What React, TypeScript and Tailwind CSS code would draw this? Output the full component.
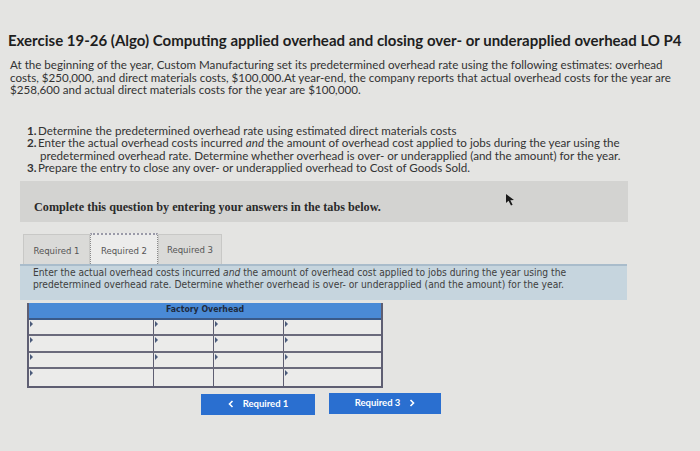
import React from "react";

function Cell({ w, mark }: { w: string; mark?: boolean }) {
  return (
    <div className={`${w} h-full border-r border-[#5e5e72] last:border-r-0 bg-[#ebebea] relative`}>
      {mark && (
        <div className="absolute left-[1px] top-[1px] w-0 h-0 border-t-[3px] border-t-transparent border-b-[3px] border-b-transparent border-l-[3px] border-l-[#4a5a7a]" />
      )}
    </div>
  );
}

function Row({ last, marks }: { last?: boolean; marks: boolean[] }) {
  return (
    <div className={`flex h-[16.5px] ${last ? "" : "border-b-2 border-[#6a6a7c]"}`}>
      <Cell w="w-[125px]" mark={marks[0]} />
      <Cell w="w-[60px]" mark={marks[1]} />
      <Cell w="w-[70px]" mark={marks[2]} />
      <Cell w="flex-1" mark={marks[3]} />
    </div>
  );
}

export default function App() {
  return (
    <div className="w-[700px] h-[451px] overflow-hidden bg-[#e4e4e2] text-[#2e2e2e] font-['Lato',sans-serif]">
      <div className="pt-[31px] pl-[8px] text-[15px] font-bold leading-[18px] text-[#1e1e1e] whitespace-nowrap">
        Exercise 19-26 (Algo) Computing applied overhead and closing over- or underapplied overhead LO P4
      </div>
      <div className="mt-[10px] pl-[10px] text-[11.6px] leading-[12.5px] text-[#333] whitespace-nowrap">
        At the beginning of the year, Custom Manufacturing set its predetermined overhead rate using the following estimates: overhead
        <br />
        costs, $250,000, and direct materials costs, $100,000.At year-end, the company reports that actual overhead costs for the year are
        <br />
        $258,600 and actual direct materials costs for the year are $100,000.
      </div>
      <div className="mt-[28px] pl-[27px] text-[11.6px] leading-[12.5px] text-[#333] whitespace-nowrap">
        <div className="flex">
          <span className="w-[11px] shrink-0 font-bold">1.</span>
          <span>Determine the predetermined overhead rate using estimated direct materials costs</span>
        </div>
        <div className="flex">
          <span className="w-[11px] shrink-0 font-bold">2.</span>
          <span>
            Enter the actual overhead costs incurred <i>and</i> the amount of overhead cost applied to jobs during the year using the
            <br />
            <span className="pl-[2px]">predetermined overhead rate. Determine whether overhead is over- or underapplied (and the amount) for the year.</span>
          </span>
        </div>
        <div className="flex">
          <span className="w-[11px] shrink-0 font-bold">3.</span>
          <span>Prepare the entry to close any over- or underapplied overhead to Cost of Goods Sold.</span>
        </div>
      </div>
      <div className="relative mt-[6px] ml-[20px] w-[608px] h-[41px] bg-[#d3d3d1]">
        <div className="absolute left-[14px] top-[20px] text-[12.2px] font-bold font-['Liberation_Serif',serif] text-[#2a2a2a] leading-[13px] whitespace-nowrap">
          Complete this question by entering your answers in the tabs below.
        </div>
        <svg className="absolute left-[485px] top-[12px]" width="12" height="14" viewBox="0 0 12 14">
          <path d="M1 1 L1 10 L3.5 7.8 L6 12.5 L7.6 11.7 L5.3 7.2 L9 7 Z" fill="#1a1a1a" />
        </svg>
      </div>
      <div className="mt-[11px] ml-[23px] flex items-end h-[31px] font-['DejaVu_Sans_Condensed','DejaVu_Sans',sans-serif] text-[9.5px] text-[#555]">
        <div className="w-[67px] h-[30px] bg-[#dadad8] border border-[#c8c8c6] border-b-0 flex items-center justify-center pt-[4px]">
          Required 1
        </div>
        <div className="w-[68px] h-[31px] bg-[#ececeb] border-x border-[#8a8a8a] border-t-2 border-t-[#9a9aa8] border-dotted flex items-center justify-center pt-[4px]">
          Required 2
        </div>
        <div className="w-[64px] h-[30px] bg-[#dadad8] border border-[#c8c8c6] border-b-0 flex items-center justify-center pt-[3px]">
          Required 3
        </div>
      </div>
      <div className="ml-[20px] w-[607px] h-[36px] bg-[#c6d5de] border-t-2 border-[#a9bccb] pl-[13px] pt-[1px] font-['DejaVu_Sans_Condensed','DejaVu_Sans',sans-serif] text-[10.2px] leading-[12.5px] text-[#404040] whitespace-nowrap">
        Enter the actual overhead costs incurred <i>and</i> the amount of overhead cost applied to jobs during the year using the
        <br />
        predetermined overhead rate. Determine whether overhead is over- or underapplied (and the amount) for the year.
      </div>
      <div className="mt-[3px] ml-[27px] w-[356px] border-2 border-t-0 border-[#5e5e72] bg-[#ebebea]">
        <div className="h-[17px] bg-[#4a8ad6] border-b-2 border-[#3a5a8a] flex items-center justify-center font-['DejaVu_Sans_Condensed','DejaVu_Sans',sans-serif] text-[8.7px] font-bold text-[#1e2a3e]">
          Factory Overhead
        </div>
        <Row marks={[true, true, true, true]} />
        <Row marks={[true, true, true, true]} />
        <Row marks={[true, true, true, true]} />
        <Row last marks={[true, false, false, true]} />
      </div>
      <div className="mt-[6px] ml-[201px] flex items-start gap-[14px]">
        <div className="w-[114px] h-[21px] bg-[#2a6fd0] flex items-center justify-center gap-[9px] text-white text-[9.5px] font-bold">
          <svg width="6" height="8" viewBox="0 0 6 8"><path d="M4.5 1 L1.5 4 L4.5 7" stroke="white" strokeWidth="1.6" fill="none" /></svg>
          <span>Required 1</span>
        </div>
        <div className="w-[112px] h-[21px] -mt-[1px] bg-[#2a6fd0] flex items-center justify-center gap-[9px] text-white text-[9.5px] font-bold">
          <span>Required 3</span>
          <svg width="6" height="8" viewBox="0 0 6 8"><path d="M1.5 1 L4.5 4 L1.5 7" stroke="white" strokeWidth="1.6" fill="none" /></svg>
        </div>
      </div>
    </div>
  );
}
